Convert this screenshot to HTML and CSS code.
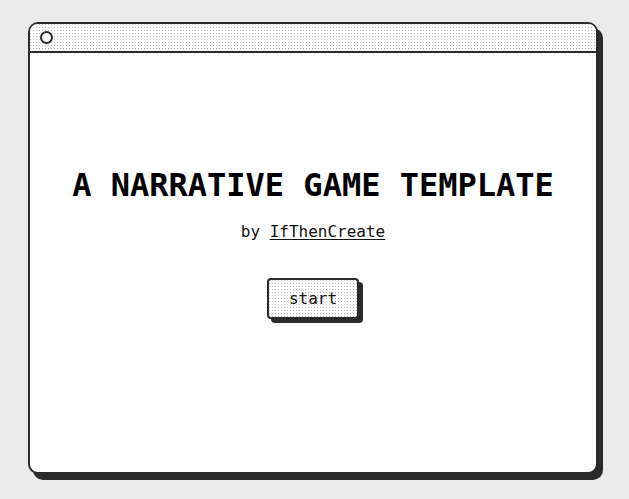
FILE: index.html
```html
<!DOCTYPE html>
<html lang="en">
<head>
  <meta charset="UTF-8">
  <title>A Narrative Game Template</title>
  <link rel="stylesheet" href="styles.css">
</head>
<body>

  <div class="window">
    <div class="titlebar">
      <span class="close-dot"></span>
    </div>

    <div class="screen">
      <h1 class="game-title">A NARRATIVE GAME TEMPLATE</h1>
      <p class="byline">by <a href="#">IfThenCreate</a></p>
      <button class="start-btn">start</button>
    </div>
  </div>

</body>
</html>
```

FILE: styles.css
```css
html {
  background-color: #ebebeb;
}

body {
  margin: 0;
  min-height: 100vh;
  box-sizing: border-box;
  color: #111111;
  font-family: 'DejaVu Sans Mono', 'Liberation Mono', monospace;
  padding: 22px 0 24px 28px;
}

/* dotted fill used on the title bar and the button */
.titlebar,
.start-btn {
  background-color: #ffffff;
  background-image: conic-gradient(at 1px 1px, transparent 270deg, #b3b3b3 0);
  background-size: 3px 3px;
}

.window {
  width: 570px;
  height: 452px;
  box-sizing: border-box;
  border: 2px solid #2b2b2b;
  border-radius: 10px;
  background-color: #ffffff;
  box-shadow: 5px 6px 0 #2b2b2b;
  overflow: hidden;
  display: flex;
  flex-direction: column;
}

.titlebar {
  height: 27px;
  border-bottom: 2px solid #2b2b2b;
  display: flex;
  align-items: center;
  padding-left: 10px;
}

.close-dot {
  width: 13px;
  height: 13px;
  box-sizing: border-box;
  border: 2px solid #2b2b2b;
  border-radius: 50%;
  background-color: #ffffff;
}

.screen {
  flex: 1;
  display: flex;
  flex-direction: column;
  align-items: center;
  padding-top: 113px;
}

.game-title {
  margin: 0;
  font-size: 32px;
  font-weight: bold;
  line-height: 38px;
  color: #000000;
}

.byline {
  margin: 18px 0 0;
  font-size: 16px;
  line-height: 20px;
}

.byline a {
  color: #111111;
  text-decoration: underline;
  text-underline-offset: 2px;
}

.start-btn {
  margin-top: 36px;
  width: 92px;
  height: 41px;
  border: 2px solid #2b2b2b;
  border-radius: 4px;
  box-shadow: 4px 4px 0 #2b2b2b;
  font-family: inherit;
  font-size: 16px;
  color: #111111;
  cursor: pointer;
}
```
